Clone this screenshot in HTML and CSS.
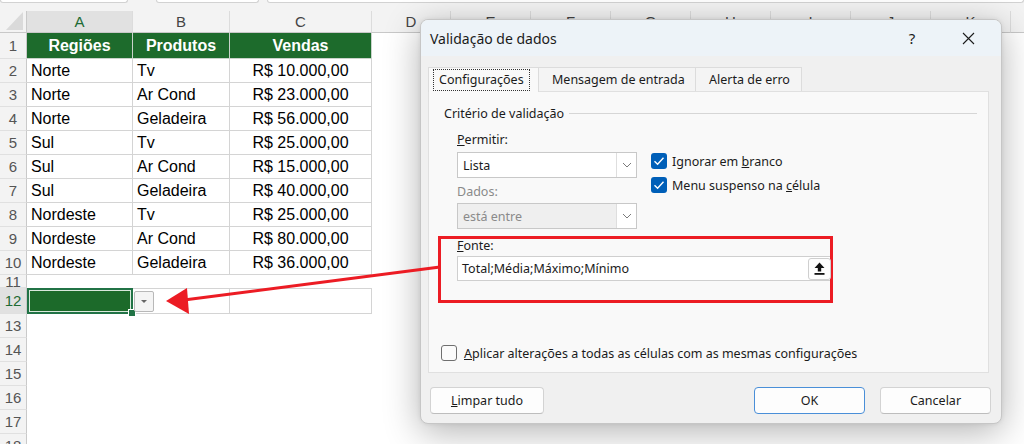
FILE: index.html
```html
<!DOCTYPE html>
<html lang="pt-BR">
<head>
  <meta charset="UTF-8" />
  <title>Validação de dados</title>
  <link rel="stylesheet" href="styles.css">
</head>
<body>
  <div class="excel">
    <div class="toolbar">
      <span class="tb-box tb-name"></span>
      <span class="tb-box tb-btns"></span>
      <span class="tb-box tb-formula"></span>
    </div>

    <div class="row row-cols">
      <div class="rh corner"><span class="tri"></span></div>
      <div class="ch w-a on">A</div>
      <div class="ch w-b">B</div>
      <div class="ch w-c">C</div>
      <div class="ch w-d">D</div>
      <div class="ch w-x">E</div>
      <div class="ch w-x">F</div>
      <div class="ch w-x">G</div>
      <div class="ch w-x">H</div>
      <div class="ch w-x">I</div>
      <div class="ch w-x">J</div>
      <div class="ch w-x">K</div>
      <div class="ch w-x">L</div>
    </div>

    <div class="row row-title">
      <div class="rh">1</div>
      <div class="c th w-a">Regiões</div>
      <div class="c th w-b">Produtos</div>
      <div class="c th w-c">Vendas</div>
    </div>
    <div class="row">
      <div class="rh">2</div>
      <div class="c line w-a">Norte</div>
      <div class="c line w-b">Tv</div>
      <div class="c line mid w-c">R$ 10.000,00</div>
    </div>
    <div class="row">
      <div class="rh">3</div>
      <div class="c line w-a">Norte</div>
      <div class="c line w-b">Ar Cond</div>
      <div class="c line mid w-c">R$ 23.000,00</div>
    </div>
    <div class="row">
      <div class="rh">4</div>
      <div class="c line w-a">Norte</div>
      <div class="c line w-b">Geladeira</div>
      <div class="c line mid w-c">R$ 56.000,00</div>
    </div>
    <div class="row">
      <div class="rh">5</div>
      <div class="c line w-a">Sul</div>
      <div class="c line w-b">Tv</div>
      <div class="c line mid w-c">R$ 25.000,00</div>
    </div>
    <div class="row">
      <div class="rh">6</div>
      <div class="c line w-a">Sul</div>
      <div class="c line w-b">Ar Cond</div>
      <div class="c line mid w-c">R$ 15.000,00</div>
    </div>
    <div class="row">
      <div class="rh">7</div>
      <div class="c line w-a">Sul</div>
      <div class="c line w-b">Geladeira</div>
      <div class="c line mid w-c">R$ 40.000,00</div>
    </div>
    <div class="row">
      <div class="rh">8</div>
      <div class="c line w-a">Nordeste</div>
      <div class="c line w-b">Tv</div>
      <div class="c line mid w-c">R$ 25.000,00</div>
    </div>
    <div class="row">
      <div class="rh">9</div>
      <div class="c line w-a">Nordeste</div>
      <div class="c line w-b">Ar Cond</div>
      <div class="c line mid w-c">R$ 80.000,00</div>
    </div>
    <div class="row">
      <div class="rh">10</div>
      <div class="c line w-a">Nordeste</div>
      <div class="c line w-b">Geladeira</div>
      <div class="c line mid w-c">R$ 36.000,00</div>
    </div>
    <div class="row row-gap">
      <div class="rh">11</div>
    </div>
    <div class="row row-sel">
      <div class="rh on">12</div>
      <div class="c w-a sel">
        <span class="dd"><i></i></span>
      </div>
      <div class="c line top w-b"></div>
      <div class="c line top w-c"></div>
    </div>
    <div class="row"><div class="rh">13</div></div>
    <div class="row"><div class="rh">14</div></div>
    <div class="row"><div class="rh">15</div></div>
    <div class="row"><div class="rh">16</div></div>
    <div class="row"><div class="rh">17</div></div>
    <div class="row"><div class="rh">18</div></div>

    <div class="dialog">
      <div class="dlg-title">
        <span class="dlg-name">Validação de dados</span>
        <span class="dlg-btn">?</span>
        <span class="dlg-btn close">
          <svg width="13" height="13" viewBox="0 0 13 13"><path d="M1 1 L12 12 M12 1 L1 12" stroke="#1b1b1b" stroke-width="1.1" fill="none"/></svg>
        </span>
      </div>

      <div class="dlg-body">
        <div class="tabs">
          <div class="tab active"><span class="focus">Configurações</span></div>
          <div class="tab t2">Mensagem de entrada</div>
          <div class="tab t3">Alerta de erro</div>
        </div>

        <div class="panel">
          <div class="group-head">
            <span>Critério de validação</span>
            <i class="rule"></i>
          </div>

          <div class="form-top">
            <div class="field-col">
              <div class="lbl"><u>P</u>ermitir:</div>
              <div class="select">
                <span class="val">Lista</span>
                <span class="chev"><svg width="10" height="6" viewBox="0 0 10 6"><polyline points="1,1 5,5 9,1" fill="none" stroke="#7a7a7a" stroke-width="1"/></svg></span>
              </div>
              <div class="lbl dis">Dados:</div>
              <div class="select disabled">
                <span class="val">está entre</span>
                <span class="chev"><svg width="10" height="6" viewBox="0 0 10 6"><polyline points="1,1 5,5 9,1" fill="none" stroke="#7a7a7a" stroke-width="1"/></svg></span>
              </div>
            </div>
            <div class="checks">
              <div class="check">
                <span class="box on"><svg width="16" height="16" viewBox="0 0 16 16"><polyline points="3.5,8.2 6.6,11.2 12.5,4.8" fill="none" stroke="#fff" stroke-width="1.4"/></svg></span>
                <span>Ignorar em <u>b</u>ranco</span>
              </div>
              <div class="check">
                <span class="box on"><svg width="16" height="16" viewBox="0 0 16 16"><polyline points="3.5,8.2 6.6,11.2 12.5,4.8" fill="none" stroke="#fff" stroke-width="1.4"/></svg></span>
                <span>Menu suspenso na <u>c</u>élula</span>
              </div>
            </div>
          </div>

          <div class="fonte-box">
            <div class="lbl"><u>F</u>onte:</div>
            <div class="input">
              <span class="val">Total;Média;Máximo;Mínimo</span>
              <span class="pick">
                <svg width="11" height="13" viewBox="0 0 11 13"><path d="M5.5 0.5 L10.5 6 H7.2 V9.5 H3.8 V6 H0.5 Z" fill="#111"/><rect x="0.5" y="11" width="10" height="1.8" fill="#111"/></svg>
              </span>
            </div>
          </div>

          <div class="check apply">
            <span class="box"></span>
            <span><u>A</u>plicar alterações a todas as células com as mesmas configurações</span>
          </div>
        </div>

        <div class="buttons">
          <button class="btn clear"><u>L</u>impar tudo</button>
          <span class="spacer"></span>
          <button class="btn primary">OK</button>
          <button class="btn">Cancelar</button>
        </div>
      </div>
    </div>

    <svg class="arrow" width="1024" height="444" viewBox="0 0 1024 444">
      <line x1="440" y1="267" x2="184" y2="300" stroke="#ec1c24" stroke-width="3"/>
      <polygon points="166,301 187,288 189,314" fill="#ec1c24"/>
    </svg>
  </div>
</body>
</html>
```

FILE: styles.css
```css
* {
  box-sizing: border-box;
}

body {
  margin: 0;
  background: #fff;
  font-family: "Liberation Sans", Arial, sans-serif;
  color: #000;
}

.excel {
  position: relative;
  width: 1024px;
  height: 444px;
  overflow: hidden;
  background: #fff;
}

/* faixa da barra de fórmulas */
.toolbar {
  height: 11px;
  background: #f3f3f3;
  display: flex;
  align-items: flex-start;
}

.tb-box {
  height: 3px;
  background: #fff;
  border: 1px solid #d2d2d2;
  border-top: none;
  border-radius: 0 0 5px 5px;
}

.tb-name { width: 128px; }
.tb-btns { width: 103px; margin-left: 28px; }
.tb-formula { flex: 1; margin-left: 8px; }

/* planilha */
.row {
  display: flex;
  height: 24px;
}

.row-cols { height: 22px; background: #f3f3f3; }
.row-title,
.row-sel { height: 26px; }
.row-gap { height: 13px; }

.rh {
  width: 27px;
  flex: none;
  display: flex;
  align-items: center;
  justify-content: center;
  overflow: hidden;
  background: #f3f3f3;
  border-right: 1px solid #c9c9c9;
  border-bottom: 1px solid #e0e0e0;
  font-size: 15px;
  color: #555;
}

.rh.on {
  background: #e1e1e1;
  color: #1d6b34;
}

.corner {
  position: relative;
  border-bottom: 1px solid #c8c8c8;
}

.corner .tri {
  position: absolute;
  right: 3px;
  bottom: 2px;
  width: 0;
  height: 0;
  border-left: 17px solid transparent;
  border-bottom: 18px solid #dadada;
}

.ch {
  flex: none;
  display: flex;
  align-items: center;
  justify-content: center;
  border-right: 1px solid #dcdcdc;
  border-bottom: 1px solid #c8c8c8;
  font-size: 15px;
  color: #444;
}

.ch.on {
  background: #e1e1e1;
  color: #1d6b34;
}

.w-a { width: 106px; }
.w-b { width: 97px; }
.w-c { width: 142px; }
.w-d { width: 79px; }
.w-x { width: 80px; }

.c {
  flex: none;
  display: flex;
  align-items: center;
  padding: 0 4px;
  font-size: 16px;
  white-space: nowrap;
}

.c.mid { justify-content: center; }

.c.line {
  border-right: 1px solid #d4d4d4;
  border-bottom: 1px solid #d4d4d4;
}

.c.top { border-top: 1px solid #d4d4d4; }

.c.th {
  background: #1d6b2c;
  color: #fff;
  font-weight: bold;
  justify-content: center;
  border-right: 1px solid #c9d3cb;
  border-bottom: 1px solid #c9d3cb;
}

.c.sel {
  position: relative;
  background: #1c6a2a;
  border: 2px solid #217346;
  box-shadow: inset 0 0 0 1px #d9e8dc;
}

.c.sel::after {
  content: "";
  position: absolute;
  right: -5px;
  bottom: -5px;
  width: 6px;
  height: 6px;
  background: #217346;
  border: 1px solid #fff;
}

.dd {
  position: absolute;
  left: 105px;
  top: 1px;
  width: 20px;
  height: 21px;
  z-index: 2;
  display: flex;
  align-items: center;
  justify-content: center;
  background: #f4f4f4;
  border: 1px solid #b8b8b8;
  border-radius: 2px;
}

.dd i {
  width: 0;
  height: 0;
  border-left: 3px solid transparent;
  border-right: 3px solid transparent;
  border-top: 3px solid #666;
}

/* janela de validação */
.dialog {
  position: absolute;
  left: 420px;
  top: 19px;
  width: 582px;
  height: 405px;
  display: flex;
  flex-direction: column;
  background: #f0f0f0;
  border: 1px solid #c6c6c6;
  border-radius: 8px;
  box-shadow: 0 8px 36px rgba(0, 0, 0, 0.3), 0 0 4px rgba(0, 0, 0, 0.08);
  font-family: "Noto Sans", "Open Sans", sans-serif;
  font-size: 12.5px;
  color: #1b1b1b;
  z-index: 5;
}

.dlg-title {
  height: 36px;
  flex: none;
  display: flex;
  align-items: center;
  padding-left: 9px;
  background: #edf3f8;
  border-radius: 7px 7px 0 0;
}

.dlg-name {
  flex: 1;
  font-size: 14px;
}

.dlg-btn {
  width: 56px;
  height: 36px;
  display: flex;
  align-items: center;
  justify-content: center;
  font-size: 15px;
}

.dlg-btn.close { margin-right: 5px; }

.dlg-body {
  padding: 11px 12px 0 7px;
}

.tabs {
  display: flex;
  height: 24px;
}

.tab {
  height: 24px;
  display: flex;
  align-items: center;
  padding-left: 13px;
  background: #f4f4f4;
  border: 1px solid #dcdcdc;
  border-bottom: none;
  white-space: nowrap;
}

.tab.active {
  width: 111px;
  height: 25px;
  padding-left: 4px;
  background: #f9f9f9;
  position: relative;
  z-index: 1;
}

.tab.t2 { width: 158px; margin-left: -1px; }
.tab.t3 { width: 107px; margin-left: -1px; }

.focus {
  padding: 1px 5px 2px;
  border: 1px dotted #333;
}

.panel {
  height: 282px;
  background: #f9f9f9;
  border: 1px solid #e0e0e0;
}

.group-head {
  display: flex;
  align-items: center;
  gap: 5px;
  height: 16px;
  margin: 13px 11px 0 15px;
}

.group-head .rule {
  flex: 1;
  height: 1px;
  background: #d6d6d6;
}

.form-top {
  display: flex;
  margin-left: 28px;
}

.field-col {
  width: 180px;
  padding-top: 11px;
}

.lbl {
  height: 16px;
  line-height: 16px;
}

.lbl.dis {
  color: #8a8a8a;
  margin-top: 6px;
}

.select {
  display: flex;
  height: 26px;
  margin-top: 4px;
  background: #fff;
  border: 1px solid #c8c8c8;
}

.select.disabled {
  margin-top: 3px;
  background: #efefef;
  color: #8a8a8a;
}

.select .val {
  flex: 1;
  display: flex;
  align-items: center;
  padding-left: 5px;
}

.chev {
  width: 20px;
  display: flex;
  align-items: center;
  justify-content: center;
  background: #fff;
  border-left: 1px solid #dedede;
}

.checks {
  display: flex;
  flex-direction: column;
  gap: 8px;
  padding-top: 32px;
  margin-left: 14px;
}

.check {
  display: flex;
  align-items: center;
  gap: 5px;
  height: 16px;
  white-space: nowrap;
}

.box {
  width: 16px;
  height: 16px;
  flex: none;
  border: 1px solid #6f6f6f;
  border-radius: 3px;
  background: #fbfbfb;
}

.box.on {
  border: none;
  background: #005fb8;
}

.box svg { display: block; }

.fonte-box {
  width: 395px;
  height: 67px;
  margin: 7px 0 0 9px;
  padding: 0 0 0 16px;
  border: 3px solid #ec1c24;
}

.fonte-box .lbl {
  height: 13px;
  line-height: 13px;
  margin-bottom: 4px;
}

.input {
  display: flex;
  align-items: center;
  height: 25px;
  background: #fff;
  border: 1px solid #cfcfcf;
  border-right: none;
}

.input .val {
  flex: 1;
  padding-left: 4px;
}

.pick {
  width: 23px;
  height: 22px;
  display: flex;
  align-items: center;
  justify-content: center;
  background: #fdfdfd;
  border: 1px solid #cfcfcf;
  border-radius: 3px;
  margin-right: -1px;
}

.check.apply {
  margin: 42px 0 0 12px;
  gap: 7px;
}

.buttons {
  display: flex;
  gap: 15px;
  margin: 14px -2px 0 2px;
}

.spacer { flex: 1; }

.btn {
  width: 111px;
  height: 27px;
  padding: 0;
  font-family: inherit;
  font-size: 12.5px;
  color: #1b1b1b;
  background: #fdfdfd;
  border: 1px solid #d3d3d3;
  border-bottom-color: #bdbdbd;
  border-radius: 4px;
}

.btn.clear { width: 114px; }

.btn.primary {
  border: 1px solid #4a8fd8;
}

.arrow {
  position: absolute;
  left: 0;
  top: 0;
  z-index: 10;
  pointer-events: none;
}
```
